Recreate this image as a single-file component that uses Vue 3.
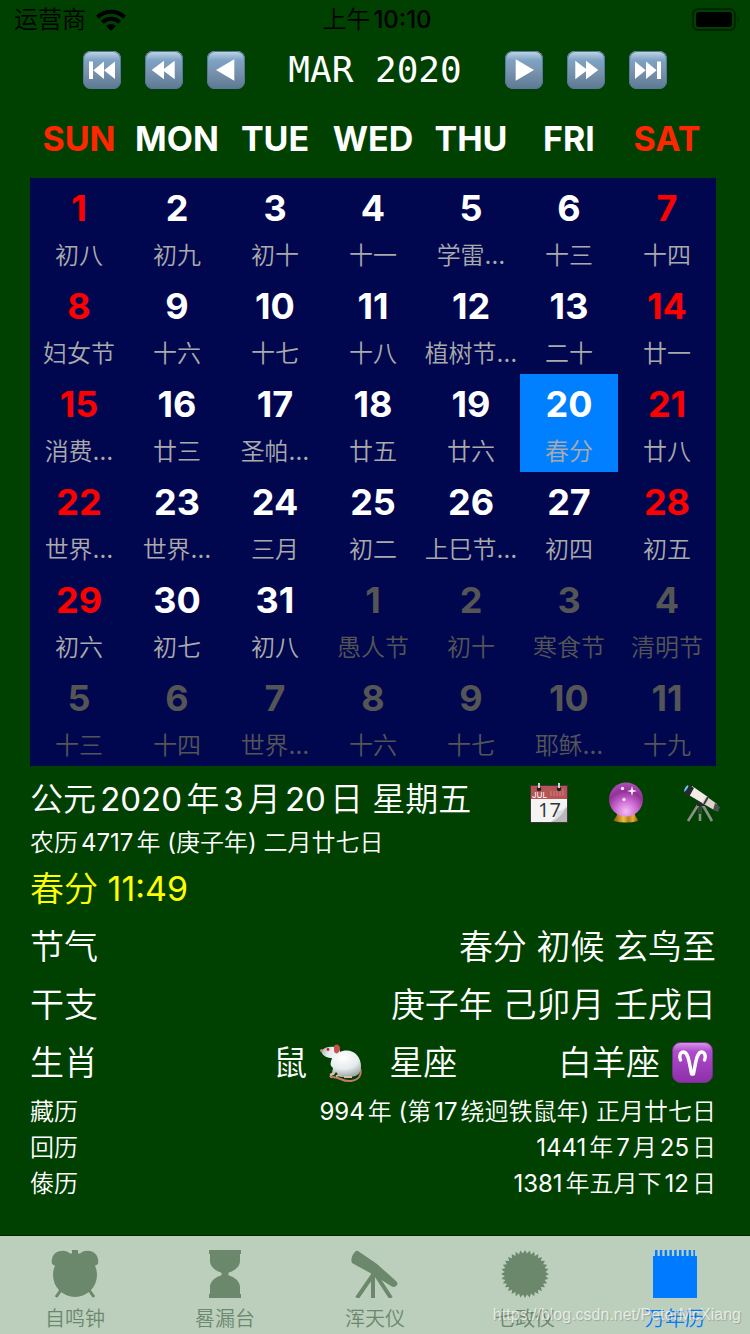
<script setup>
import { computed, ref } from 'vue'

const weekdays = ['SUN', 'MON', 'TUE', 'WED', 'THU', 'FRI', 'SAT']

const lunar = [
  ['初八', '初九', '初十', '十一', '学雷…', '十三', '十四'],
  ['妇女节', '十六', '十七', '十八', '植树节…', '二十', '廿一'],
  ['消费…', '廿三', '圣帕…', '廿五', '廿六', '春分', '廿八'],
  ['世界…', '世界…', '三月', '初二', '上巳节…', '初四', '初五'],
  ['初六', '初七', '初八', '愚人节', '初十', '寒食节', '清明节'],
  ['十三', '十四', '世界…', '十六', '十七', '耶稣…', '十九']
]

const DAYS = 31
const selected = ref(20)

const weeks = computed(() =>
  lunar.map((row, w) =>
    row.map((text, d) => {
      const n = w * 7 + d + 1
      const other = n > DAYS
      return {
        key: n,
        num: other ? n - DAYS : n,
        text,
        other,
        weekend: !other && (d === 0 || d === 6)
      }
    })
  )
)

// Треугольники и планка внутри кнопки 38x38
const prevButtons = [
  { name: '上一世纪', d: 'M6 10.5h4v17.500H6z M21 10.500v17.500L10.300 19.200z M32 10.500v17.500L21 19.200z' },
  { name: '上一年', d: 'M19 9.700v18.600L6.700 19z M29.700 9.700v18.600L17.500 19z' },
  { name: '上一月', d: 'M27.300 8.300v21.400L9 19z' }
]
const nextButtons = [
  { name: '下一月', d: 'M10.700 8.300v21.400L29 19z' },
  { name: '下一年', d: 'M8.300 9.700v18.600L20.500 19z M19 9.700v18.600L31.300 19z' },
  { name: '下一世纪', d: 'M6 10.500v17.500l10.700-8.800z M17 10.500v17.500l10.700-8.800z M28 10.500h4v17.500h-4z' }
]

const calendars = [
  { name: '藏历', value: '994年 (第17绕迥铁鼠年) 正月廿七日' },
  { name: '回历', value: '1441年7月25日' },
  { name: '傣历', value: '1381年五月下12日' }
]

const tabs = [
  { id: 'clock', name: '自鸣钟' },
  { id: 'hourglass', name: '晷漏台' },
  { id: 'telescope', name: '浑天仪' },
  { id: 'gear', name: '七政仪' },
  { id: 'calendar', name: '万年历' }
]
const activeTab = ref('calendar')

// Контур шестерёнки с 32 зубцами
const gear = Array.from({ length: 64 }, (_, i) => {
  const r = i % 2 ? 20.5 : 24
  const a = (i * Math.PI) / 32
  return `${(24 + r * Math.sin(a)).toFixed(1)},${(24 - r * Math.cos(a)).toFixed(1)}`
}).join(' ')
</script>

<template>
  <div class="page" lang="zh-CN">
    <header class="status">
      <div class="carrier">
        <span>运营商</span>
        <svg width="30" height="22" viewBox="0 0 30 22">
          <g fill="none" stroke="#000" stroke-width="4">
            <path d="M1.500 8.300a19.500 19.500 0 0 1 27 0" />
            <path d="M6.300 13.300a12.500 12.500 0 0 1 17.400 0" />
          </g>
          <path d="M10 17.100a7.200 7.200 0 0 1 10 0L15 22z" />
        </svg>
      </div>
      <div class="time">上午10:10</div>
      <svg class="battery" width="48" height="24" viewBox="0 0 48 24">
        <rect x="1" y="1" width="42" height="21" rx="5" fill="none" stroke="#002600" stroke-width="2" />
        <rect x="4" y="4" width="36" height="15" rx="3" />
        <path d="M45.500 8q3 3.500 0 7z" fill="#002600" />
      </svg>
    </header>

    <nav class="toolbar">
      <div class="group">
        <button v-for="b in prevButtons" :key="b.name" type="button" class="key" :aria-label="b.name">
          <svg width="38" height="38" viewBox="0 0 38 38"><path :d="b.d" fill="#fff" /></svg>
        </button>
      </div>
      <h1 class="title">MAR 2020</h1>
      <div class="group">
        <button v-for="b in nextButtons" :key="b.name" type="button" class="key" :aria-label="b.name">
          <svg width="38" height="38" viewBox="0 0 38 38"><path :d="b.d" fill="#fff" /></svg>
        </button>
      </div>
    </nav>

    <main class="content">
      <table class="month">
        <thead>
          <tr>
            <th v-for="(w, i) in weekdays" :key="w" :class="{ off: i === 0 || i === 6 }">{{ w }}</th>
          </tr>
        </thead>
        <tbody>
          <tr v-for="(week, i) in weeks" :key="i">
            <td v-for="day in week" :key="day.key">
              <button
                type="button"
                class="day"
                :class="{ other: day.other, weekend: day.weekend, selected: day.key === selected }"
                @click="selected = day.key"
              >
                <span class="num">{{ day.num }}</span>
                <span class="lunar">{{ day.text }}</span>
              </button>
            </td>
          </tr>
        </tbody>
      </table>

      <section class="info">
        <div class="row">
          <h2>公元2020年3月20日 星期五</h2>
          <div class="tools">
            <button type="button" class="tool" aria-label="今天">
              <svg width="40" height="42" viewBox="0 0 40 42">
                <path d="M1 3h38v38H1z" fill="#3c3636" />
                <path d="M2 4h36v13H2z" fill="#b65556" />
                <path d="M2 17h36v11L25 40H2z" fill="#f4f4f4" />
                <path d="M38 25c-3 3-6 4-9 5 0 4-3 7-7 10h16z" fill="#b9b9b9" />
                <path d="M38 23c-2 4-6 6-10 6 1 5-3 9-7 11 7-1 14-9 17-17z" fill="#ddd" />
                <path d="M22 14v-5m3 5V9m3 5V8m3 6V8m3 6V7" stroke="#cf8080" />
                <text x="3" y="16" class="cal-month">JUL</text>
                <text x="9" y="35" class="cal-day">17</text>
                <g fill="#222"><circle cx="10" cy="7" r="2.300" /><circle cx="30" cy="7" r="2.300" /></g>
                <path d="M10 1v5M30 1v5" stroke="#c8ced2" stroke-width="2" />
              </svg>
            </button>
            <button type="button" class="tool" aria-label="占卜">
              <svg width="36" height="42" viewBox="0 0 36 42">
                <defs>
                  <radialGradient id="ball" cx="50%" cy="85%" r="85%">
                    <stop offset="0" stop-color="#f1bdf5" />
                    <stop offset="0.350" stop-color="#cf70d6" />
                    <stop offset="0.700" stop-color="#923198" />
                    <stop offset="1" stop-color="#b04fb5" />
                  </radialGradient>
                  <linearGradient id="gold">
                    <stop offset="0" stop-color="#8b5a14" />
                    <stop offset="0.400" stop-color="#f0bd3c" />
                    <stop offset="0.600" stop-color="#b87f20" />
                    <stop offset="0.800" stop-color="#e5ae38" />
                    <stop offset="1" stop-color="#825313" />
                  </linearGradient>
                </defs>
                <path d="M9 32h18c0 3 3 4 3 7q-12 3-24 0c0-3 3-4 3-7z" fill="url(#gold)" />
                <circle cx="18" cy="17.500" r="17" fill="url(#ball)" />
                <path d="M24 4l1 4 4 1-4 1-1 4-1-4-4-1 4-1z" fill="#fff" />
                <circle cx="14.500" cy="6.500" r="1.700" fill="#ffe0ff" />
                <circle cx="16" cy="17.500" r="1.700" fill="#ffd7ff" />
              </svg>
            </button>
            <button type="button" class="tool" aria-label="观星">
              <svg width="38" height="42" viewBox="0 0 38 42">
                <g stroke="#89908b" stroke-width="2.600">
                  <path d="M17 20L5 39M17 20v19M18 20l11 19" />
                </g>
                <path d="M17 22v10" stroke="#343a38" stroke-width="2" />
                <path d="M14 19l4-3 5 3-1 5h-8z" fill="#252b2b" />
                <path d="M9 4L25 15 21 22 4 12z" fill="#f3ebe5" />
                <path d="M23 14l11 8-3 6-12-7z" fill="#ded4cd" />
                <path d="M32 21l5 4-2 5-5-2z" fill="#4c514f" />
                <path d="M5 2l6 4-5 9-6-4z" fill="#252b2b" />
                <path d="M5 3q1 1-1 4t-3 3q0-2 1-4t3-3z" fill="#69c5ee" />
                <path d="M25 15l-4 7" stroke="#393e3c" stroke-width="2" />
              </svg>
            </button>
          </div>
        </div>
        <p class="small first">农历4717年 (庚子年) 二月廿七日</p>
        <p class="term">春分 11:49</p>
        <dl class="row">
          <dt>节气</dt>
          <dd>春分 初候 玄鸟至</dd>
        </dl>
        <dl class="row">
          <dt>干支</dt>
          <dd>庚子年 己卯月 壬戌日</dd>
        </dl>
        <div class="signs">
          <dl class="row">
            <dt>生肖</dt>
            <dd class="with-icon">
              鼠
              <svg width="44" height="40" viewBox="0 0 44 40">
                <defs>
                  <radialGradient id="fur" cx="55%" cy="35%" r="65%">
                    <stop offset="0" stop-color="#fff" />
                    <stop offset="0.600" stop-color="#e6ebed" />
                    <stop offset="1" stop-color="#9caaa9" />
                  </radialGradient>
                </defs>
                <path d="M11 34c10-1 11 5 21 4 8-1 11-6 9-13" fill="none" stroke="#ca7770" stroke-width="2" />
                <path
                  d="M2 8C5 4 11 3 16 4c4 0 5 3 5 5 11-5 21 3 21 14 0 9-5 11-14 11h-7l-4-5-2 3-5 2 3-4 1-5c-4-3-2-6-1-10-4 0-9-1-11-7z"
                  fill="url(#fur)"
                />
                <path d="M11 32l4-2M17 33l4-1M25 34h8" stroke="#e7b5a7" stroke-width="2" />
                <path d="M15 4c0-4 6-3 6 1 0 6-5 7-6 3z" fill="#ca5149" />
                <circle cx="9" cy="6.500" r="1.400" fill="#cc2222" />
                <circle cx="2.500" cy="7.500" r="1.500" fill="#cf8b82" />
              </svg>
            </dd>
          </dl>
          <dl class="row">
            <dt>星座</dt>
            <dd class="with-icon">
              白羊座
              <svg width="44" height="42" viewBox="0 0 44 42">
                <defs>
                  <linearGradient id="aries" x2="0" y2="1">
                    <stop offset="0" stop-color="#d49be4" />
                    <stop offset="0.220" stop-color="#b04bcd" />
                    <stop offset="1" stop-color="#8c30a8" />
                  </linearGradient>
                </defs>
                <rect x="0.500" y="0.500" width="40" height="40" rx="8" fill="url(#aries)" stroke="#76308d" />
                <path
                  d="M8.500 18c-2-4 0-8 3-8 5 0 6 12 8 22h2c2-10 3-22 8-22 3 0 5 4 3 8"
                  fill="none"
                  stroke="#fff"
                  stroke-width="3.400"
                  stroke-linecap="round"
                  stroke-linejoin="round"
                />
              </svg>
            </dd>
          </dl>
        </div>
        <dl v-for="c in calendars" :key="c.name" class="row small">
          <dt>{{ c.name }}</dt>
          <dd>{{ c.value }}</dd>
        </dl>
      </section>
    </main>

    <footer class="tabbar">
      <button
        v-for="t in tabs"
        :key="t.id"
        type="button"
        class="tab"
        :class="{ active: activeTab === t.id }"
        @click="activeTab = t.id"
      >
        <svg width="48" height="48" viewBox="0 0 48 48" fill="currentColor">
          <g v-if="t.id === 'clock'">
            <circle cx="24" cy="25" r="22" />
            <path d="M1 14C-1 3 9-2 17 2l4 3v12H6zM47 14C49 3 39-2 31 2l-4 3v12h15zM21 0h6v6h-6z" />
            <path d="M10 40l-5 7M38 40l5 7" stroke="currentColor" stroke-width="3" />
          </g>
          <path
            v-else-if="t.id === 'hourglass'"
            d="M8 0h32v4h-1v7c0 6-6 10-11 11.500-1 1-1 2 0 3C33 27 39 31 39 37v7h1v4H8v-4h1v-7c0-6 6-10 11-11.500 1-1 1-2 0-3C15 21 9 17 9 11V4H8z"
          />
          <g v-else-if="t.id === 'telescope'">
            <path d="M7 1l19 13 19 17q3 3 0 5-2 2-5 0L21 24 1 13Q-1 8 3 3 5 0 7 1z" />
            <path d="M24 22L6 48M22 22v26M23 22l17 26" stroke="currentColor" stroke-width="4" />
          </g>
          <polygon v-else-if="t.id === 'gear'" :points="gear" />
          <g v-else>
            <path d="M2 6h44v42H2z" />
            <path d="M4 3h40" stroke="currentColor" stroke-width="6" stroke-dasharray="2.500 2.300" />
          </g>
        </svg>
        <span>{{ t.name }}</span>
      </button>
      <span class="watermark">https://blog.csdn.net/PeterMcXiang</span>
    </footer>
  </div>
</template>

<style>
body {
  background: #004000;
}
</style>

<style scoped>
.page {
  min-height: 100vh;
  display: flex;
  flex-direction: column;
  background: #004000;
  color: #fff;
  font-family: Inter, 'Noto Sans CJK SC DemiLight', 'Noto Sans CJK SC', sans-serif;
  font-weight: 400;
  text-autospace: normal;
}

button {
  margin: 0;
  padding: 0;
  border: none;
  background: none;
  color: inherit;
  font: inherit;
  cursor: pointer;
}

svg {
  display: block;
  flex: none;
}

h1,
h2,
p,
dl,
dd {
  margin: 0;
  font-size: inherit;
  font-weight: inherit;
}

.status {
  height: 40px;
  padding: 0 10px 0 14px;
  display: grid;
  grid-template-columns: 1fr auto 1fr;
  align-items: center;
  color: #000;
  font-size: 24px;
  line-height: 40px;
}

.carrier {
  display: flex;
  align-items: center;
  gap: 10px;
}

.time {
  font-weight: 500;
}

.battery {
  justify-self: end;
}

.toolbar {
  height: 60px;
  display: flex;
  align-items: center;
  justify-content: center;
  gap: 43px;
}

.group {
  display: flex;
  gap: 24px;
}

.title {
  font-family: 'DejaVu Sans Mono', monospace;
  font-size: 36px;
  font-weight: 400;
  line-height: 60px;
}

.key {
  width: 38px;
  height: 38px;
  border-radius: 8px;
  background: linear-gradient(#c3d8e8, #7fa3c4 24%, #7590ab 60%, #5d7891);
  box-shadow: inset 0 0 0 1px #58779a;
}

.content {
  flex: 1;
  padding: 0 34px 0 30px;
}

.month {
  width: 100%;
  table-layout: fixed;
  border-collapse: collapse;
}

.month th {
  height: 78px;
  padding: 0;
  font-size: 34px;
  font-weight: 700;
  line-height: 78px;
}

.month th.off {
  color: #ff2600;
}

.month td {
  padding: 0;
  background: #00074f;
}

.day {
  width: 100%;
  height: 98px;
  display: flex;
  flex-direction: column;
  align-items: center;
  white-space: nowrap;
}

.num {
  height: 60px;
  font-size: 36px;
  font-weight: 700;
  line-height: 60px;
}

.lunar {
  height: 36px;
  color: #aaa;
  font-size: 24px;
  line-height: 36px;
}

.weekend .num {
  color: #f00;
}

.other .num,
.other .lunar {
  color: #555;
}

.selected {
  background: #0080ff;
}

.info {
  padding-top: 4px;
  font-size: 34px;
  line-height: 58px;
}

.info h2 {
  font-size: 33px;
}

.row {
  display: flex;
  align-items: center;
  justify-content: space-between;
  white-space: nowrap;
}

.tools {
  display: flex;
  align-items: center;
  gap: 39px;
  margin-right: -5px;
  padding-top: 8px;
}

.cal-month {
  fill: #fff;
  font-size: 8px;
  font-weight: 400;
}

.cal-day {
  fill: #333;
  font-family: 'Open Sans', sans-serif;
  font-size: 20px;
  font-weight: 400;
}

.small {
  font-size: 24px;
  line-height: 36px;
}

.small.first {
  line-height: 30px;
  margin-bottom: 2px;
}

.term {
  color: #ff0;
}

.signs {
  display: grid;
  grid-template-columns: 51fr 50fr;
  gap: 26px;
  margin-bottom: 2px;
}

.with-icon {
  display: flex;
  align-items: center;
  gap: 12px;
}

.tabbar {
  position: relative;
  height: 98px;
  display: flex;
  background: #bccfbc;
  box-shadow: 0 -1px 0 #002c00;
  color: #6c886c;
}

.tab {
  flex: 1;
  padding-top: 14px;
  display: flex;
  flex-direction: column;
  align-items: center;
  gap: 6px;
  font-size: 20px;
  line-height: 30px;
}

.tab.active {
  color: #007aff;
}

.watermark {
  position: absolute;
  right: 9px;
  bottom: 8px;
  color: rgba(255, 255, 255, 0.7);
  font-family: 'Liberation Sans', sans-serif;
  font-size: 16px;
  line-height: 22px;
  text-shadow: 1px 1px 1px rgba(0, 0, 0, 0.2);
  pointer-events: none;
}
</style>
